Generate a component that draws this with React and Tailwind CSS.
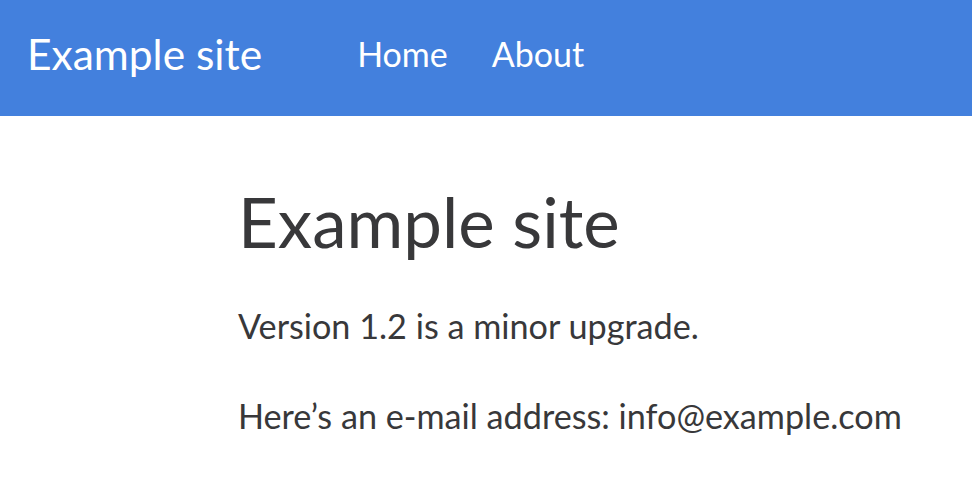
import React from 'react';

const App = () => {
  return (
    <div className="min-h-screen bg-white font-['Lato',sans-serif] text-[#38383a]">
      {/* Top bar */}
      <header className="h-[116px] bg-[#4380dd] flex items-center px-[27px] pb-[8px] text-white">
        <a href="#" className="text-[42.5px] leading-none mr-[95px]">Example site</a>
        <nav className="flex items-center gap-[44px] text-[34px] leading-none">
          <a href="#">Home</a>
          <a href="#">About</a>
        </nav>
      </header>

      {/* Content */}
      <main className="pl-[238px] pt-[66px]">
        <h1 className="text-[69px] leading-[80px]">Example site</h1>
        <p className="mt-[44px] text-[34.2px] leading-[40px]">Version 1.2 is a minor upgrade.</p>
        <p className="mt-[50px] text-[34.2px] leading-[40px]">Here’s an e-mail address: info@example.com</p>
      </main>
    </div>
  );
};

export default App;
